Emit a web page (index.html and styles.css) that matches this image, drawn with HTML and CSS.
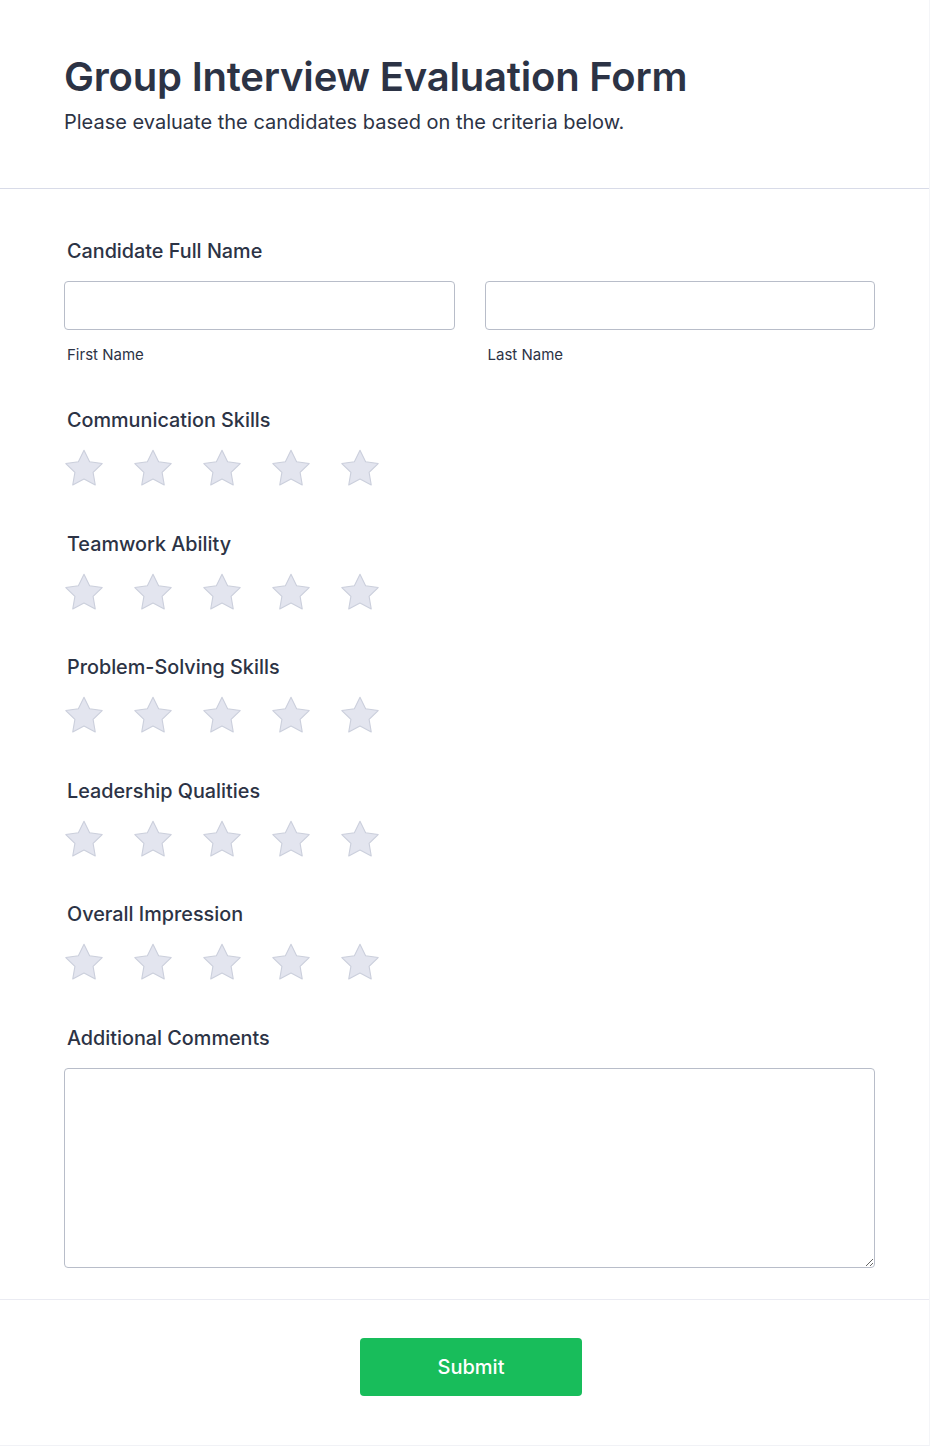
FILE: index.html
```html
<!DOCTYPE html>
<html lang="en">
<head>
<meta charset="utf-8">
<title>Group Interview Evaluation Form</title>
<link rel="stylesheet" href="styles.css">
</head>
<body>
<form class="form">
  <header class="form-header">
    <h1 class="form-title">Group Interview Evaluation Form</h1>
    <p class="form-subtitle">Please evaluate the candidates based on the criteria below.</p>
  </header>

  <div class="form-body">
    <div class="field field-name">
      <label class="field-label">Candidate Full Name</label>
      <div class="name-grid">
        <div class="name-part">
          <input class="text-input" type="text">
          <span class="sublabel">First Name</span>
        </div>
        <div class="name-part">
          <input class="text-input" type="text">
          <span class="sublabel">Last Name</span>
        </div>
      </div>
    </div>

    <div class="field field-rating">
      <label class="field-label">Communication Skills</label>
      <div class="stars">
        <svg class="star" viewBox="1 1 22 22"><path d="M12 2.3l3.09 6.26 6.91 1.01-5 4.870 1.18 6.88L12 18.07l-6.18 3.25L7 14.44 2 9.57l6.91-1.01L12 2.3z"/></svg>
        <svg class="star" viewBox="1 1 22 22"><path d="M12 2.3l3.09 6.26 6.91 1.01-5 4.870 1.18 6.88L12 18.07l-6.18 3.25L7 14.44 2 9.57l6.91-1.01L12 2.3z"/></svg>
        <svg class="star" viewBox="1 1 22 22"><path d="M12 2.3l3.09 6.26 6.91 1.01-5 4.870 1.18 6.88L12 18.07l-6.18 3.25L7 14.44 2 9.57l6.91-1.01L12 2.3z"/></svg>
        <svg class="star" viewBox="1 1 22 22"><path d="M12 2.3l3.09 6.26 6.91 1.01-5 4.870 1.18 6.88L12 18.07l-6.18 3.25L7 14.44 2 9.57l6.91-1.01L12 2.3z"/></svg>
        <svg class="star" viewBox="1 1 22 22"><path d="M12 2.3l3.09 6.26 6.91 1.01-5 4.870 1.18 6.88L12 18.07l-6.18 3.25L7 14.44 2 9.57l6.91-1.01L12 2.3z"/></svg>
      </div>
    </div>

    <div class="field field-rating">
      <label class="field-label">Teamwork Ability</label>
      <div class="stars">
        <svg class="star" viewBox="1 1 22 22"><path d="M12 2.3l3.09 6.26 6.91 1.01-5 4.870 1.18 6.88L12 18.07l-6.18 3.25L7 14.44 2 9.57l6.91-1.01L12 2.3z"/></svg>
        <svg class="star" viewBox="1 1 22 22"><path d="M12 2.3l3.09 6.26 6.91 1.01-5 4.870 1.18 6.88L12 18.07l-6.18 3.25L7 14.44 2 9.57l6.91-1.01L12 2.3z"/></svg>
        <svg class="star" viewBox="1 1 22 22"><path d="M12 2.3l3.09 6.26 6.91 1.01-5 4.870 1.18 6.88L12 18.07l-6.18 3.25L7 14.44 2 9.57l6.91-1.01L12 2.3z"/></svg>
        <svg class="star" viewBox="1 1 22 22"><path d="M12 2.3l3.09 6.26 6.91 1.01-5 4.870 1.18 6.88L12 18.07l-6.18 3.25L7 14.44 2 9.57l6.91-1.01L12 2.3z"/></svg>
        <svg class="star" viewBox="1 1 22 22"><path d="M12 2.3l3.09 6.26 6.91 1.01-5 4.870 1.18 6.88L12 18.07l-6.18 3.25L7 14.44 2 9.57l6.91-1.01L12 2.3z"/></svg>
      </div>
    </div>

    <div class="field field-rating">
      <label class="field-label">Problem-Solving Skills</label>
      <div class="stars">
        <svg class="star" viewBox="1 1 22 22"><path d="M12 2.3l3.09 6.26 6.91 1.01-5 4.870 1.18 6.88L12 18.07l-6.18 3.25L7 14.44 2 9.57l6.91-1.01L12 2.3z"/></svg>
        <svg class="star" viewBox="1 1 22 22"><path d="M12 2.3l3.09 6.26 6.91 1.01-5 4.870 1.18 6.88L12 18.07l-6.18 3.25L7 14.44 2 9.57l6.91-1.01L12 2.3z"/></svg>
        <svg class="star" viewBox="1 1 22 22"><path d="M12 2.3l3.09 6.26 6.91 1.01-5 4.870 1.18 6.88L12 18.07l-6.18 3.25L7 14.44 2 9.57l6.91-1.01L12 2.3z"/></svg>
        <svg class="star" viewBox="1 1 22 22"><path d="M12 2.3l3.09 6.26 6.91 1.01-5 4.870 1.18 6.88L12 18.07l-6.18 3.25L7 14.44 2 9.57l6.91-1.01L12 2.3z"/></svg>
        <svg class="star" viewBox="1 1 22 22"><path d="M12 2.3l3.09 6.26 6.91 1.01-5 4.870 1.18 6.88L12 18.07l-6.18 3.25L7 14.44 2 9.57l6.91-1.01L12 2.3z"/></svg>
      </div>
    </div>

    <div class="field field-rating">
      <label class="field-label">Leadership Qualities</label>
      <div class="stars">
        <svg class="star" viewBox="1 1 22 22"><path d="M12 2.3l3.09 6.26 6.91 1.01-5 4.870 1.18 6.88L12 18.07l-6.18 3.25L7 14.44 2 9.57l6.91-1.01L12 2.3z"/></svg>
        <svg class="star" viewBox="1 1 22 22"><path d="M12 2.3l3.09 6.26 6.91 1.01-5 4.870 1.18 6.88L12 18.07l-6.18 3.25L7 14.44 2 9.57l6.91-1.01L12 2.3z"/></svg>
        <svg class="star" viewBox="1 1 22 22"><path d="M12 2.3l3.09 6.26 6.91 1.01-5 4.870 1.18 6.88L12 18.07l-6.18 3.25L7 14.44 2 9.57l6.91-1.01L12 2.3z"/></svg>
        <svg class="star" viewBox="1 1 22 22"><path d="M12 2.3l3.09 6.26 6.91 1.01-5 4.870 1.18 6.88L12 18.07l-6.18 3.25L7 14.44 2 9.57l6.91-1.01L12 2.3z"/></svg>
        <svg class="star" viewBox="1 1 22 22"><path d="M12 2.3l3.09 6.26 6.91 1.01-5 4.870 1.18 6.88L12 18.07l-6.18 3.25L7 14.44 2 9.57l6.91-1.01L12 2.3z"/></svg>
      </div>
    </div>

    <div class="field field-rating">
      <label class="field-label">Overall Impression</label>
      <div class="stars">
        <svg class="star" viewBox="1 1 22 22"><path d="M12 2.3l3.09 6.26 6.91 1.01-5 4.870 1.18 6.88L12 18.07l-6.18 3.25L7 14.44 2 9.57l6.91-1.01L12 2.3z"/></svg>
        <svg class="star" viewBox="1 1 22 22"><path d="M12 2.3l3.09 6.26 6.91 1.01-5 4.870 1.18 6.88L12 18.07l-6.18 3.25L7 14.44 2 9.57l6.91-1.01L12 2.3z"/></svg>
        <svg class="star" viewBox="1 1 22 22"><path d="M12 2.3l3.09 6.26 6.91 1.01-5 4.870 1.18 6.88L12 18.07l-6.18 3.25L7 14.44 2 9.57l6.91-1.01L12 2.3z"/></svg>
        <svg class="star" viewBox="1 1 22 22"><path d="M12 2.3l3.09 6.26 6.91 1.01-5 4.870 1.18 6.88L12 18.07l-6.18 3.25L7 14.44 2 9.57l6.91-1.01L12 2.3z"/></svg>
        <svg class="star" viewBox="1 1 22 22"><path d="M12 2.3l3.09 6.26 6.91 1.01-5 4.870 1.18 6.88L12 18.07l-6.18 3.25L7 14.44 2 9.57l6.91-1.01L12 2.3z"/></svg>
      </div>
    </div>

    <div class="field field-comments">
      <label class="field-label">Additional Comments</label>
      <textarea class="textarea"></textarea>
    </div>
  </div>

  <footer class="form-footer">
    <button class="submit-btn" type="button">Submit</button>
  </footer>
</form>
</body>
</html>
```

FILE: styles.css
```css
* {
  box-sizing: border-box;
}

html, body {
  margin: 0;
  padding: 0;
  background: #ffffff;
}

body {
  font-family: Inter, "Noto Sans", "Liberation Sans", sans-serif;
  color: #2c3345;
}

.form {
  width: 930px;
  border-right: 1px solid #f4f5f8;
  border-bottom: 1px solid #f1f2f6;
}

.form-header {
  padding: 53px 64px 54px 64px;
  border-bottom: 1px solid #d8dbe8;
}

.form-title {
  margin: 0;
  font-size: 40px;
  line-height: 48px;
  font-weight: 600;
  letter-spacing: -0.2px;
  color: #2c3345;
}

.form-subtitle {
  margin: 9px 0 0 0;
  font-size: 20px;
  line-height: 24px;
  font-weight: 400;
  color: #2c3345;
}

.form-body {
  padding: 50px 0 31px 64px;
  width: 875px;
}

.field + .field {
  margin-top: 43.5px;
}

.field-name + .field {
  margin-top: 44px;
}

.field-label {
  display: block;
  padding-left: 3px;
  font-size: 19.8px;
  line-height: 24px;
  font-weight: 500;
  color: #2c3345;
}

.name-grid {
  margin-top: 18px;
  display: grid;
  grid-template-columns: 1fr 1fr;
  column-gap: 30px;
}

.name-part {
  display: flex;
  flex-direction: column;
}

.text-input {
  height: 49px;
  width: 100%;
  border: 1px solid #b8bdc9;
  border-radius: 4px;
  background: #ffffff;
  font-family: inherit;
  font-size: 16px;
  padding: 0 12px;
  margin: 0;
}

.sublabel {
  margin-top: 16px;
  padding-left: 3px;
  font-size: 15px;
  line-height: 18px;
  font-weight: 400;
  color: #2c3345;
}

.stars {
  margin-top: 16px;
  display: flex;
  gap: 29px;
  height: 40px;
}

.star {
  width: 40px;
  height: 40px;
  flex: none;
  fill: #e3e5ef;
  stroke: #cbcfdc;
  stroke-width: 0.6;
  stroke-linejoin: round;
}

.textarea {
  display: block;
  margin-top: 18px;
  width: 100%;
  height: 200px;
  border: 1px solid #b8bdc9;
  border-radius: 4px;
  background: #ffffff;
  font-family: inherit;
  font-size: 16px;
  padding: 10px 12px;
  resize: vertical;
}

.form-footer {
  border-top: 1px solid #eaebf2;
  padding: 38px 0 49.5px 64px;
  width: 100%;
}

.submit-btn {
  display: block;
  margin: 0 0 0 296px;
  width: 222px;
  height: 58px;
  border: none;
  border-radius: 4px;
  background: #18bd5b;
  color: #ffffff;
  font-family: inherit;
  font-size: 20px;
  font-weight: 500;
  cursor: pointer;
}
```
